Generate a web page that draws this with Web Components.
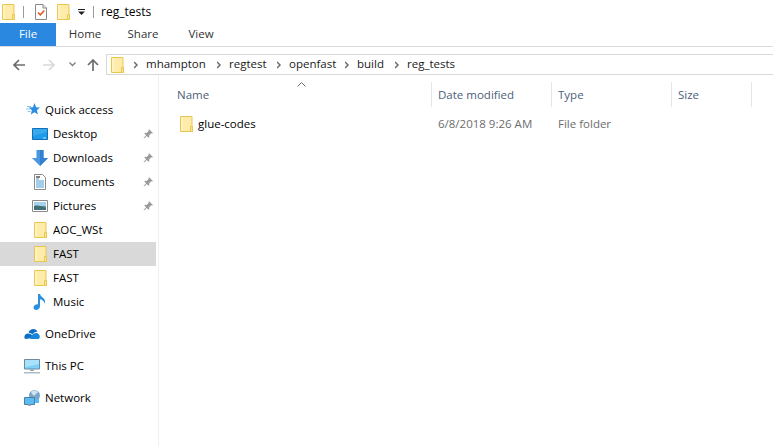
<!DOCTYPE html>
<html>
<head>
<meta charset="utf-8">
<style>
  html, body { margin: 0; padding: 0; background: #fff; }
  body { width: 773px; height: 446px; overflow: hidden; font: 11.5px "Open Sans", "Noto Sans", sans-serif; color: #000; }
</style>
</head>
<body>
<explorer-window>
  <title-bar slot="title" label="reg_tests"></title-bar>
  <ribbon-tabs slot="tabs"></ribbon-tabs>
  <address-bar slot="address"></address-bar>
  <nav-pane slot="nav">
    <nav-section>
      <nav-item icon="star" top>Quick access</nav-item>
      <nav-item icon="desktop" pinned>Desktop</nav-item>
      <nav-item icon="downloads" pinned>Downloads</nav-item>
      <nav-item icon="documents" pinned>Documents</nav-item>
      <nav-item icon="pictures" pinned>Pictures</nav-item>
      <nav-item icon="folder">AOC_WSt</nav-item>
      <nav-item icon="folder" selected>FAST</nav-item>
      <nav-item icon="folder">FAST</nav-item>
      <nav-item icon="music">Music</nav-item>
    </nav-section>
    <nav-section><nav-item icon="onedrive" top>OneDrive</nav-item></nav-section>
    <nav-section><nav-item icon="pc" top>This PC</nav-item></nav-section>
    <nav-section><nav-item icon="network" top>Network</nav-item></nav-section>
  </nav-pane>
  <file-list slot="files">
    <file-row name="glue-codes" date="6/8/2018 9:26 AM" type="File folder"></file-row>
  </file-list>
</explorer-window>

<script>
// all the little pictures, drawn on a 16x16 box
const ICONS = {
  folder: `<path d="M.5 .5h11.500v15h-11.500z" fill="#ffecaa" stroke="#e9c64f"/><path d="M1 1h2v14h-2z" fill="#fff3c4"/><path d="M10.500 10.500h2v5h-2z" fill="#fde58f" stroke="#e9c64f"/>`,
  star: `<path d="M10.500 1l1.600 4.200 3.900.300-3.100 2.700 1.100 4.400-3.500-2.400-3.700 2.400 1.100-4.400-3.100-2.700 4.100-.300z" fill="#2c8ee0"/><path d="M3 4.500h4M2 7h4M3.500 9.500h3" stroke="#8fc4ee"/>`,
  desktop: `<path d="M.5 2.500h15v11h-15z" fill="#1d9ae8" stroke="#0f6fb8"/><path d="M1 3h14v3l-14 4z" fill="#4cb6f2" opacity=".6"/><path d="M11 12h3" stroke="#bfe4fa"/>`,
  downloads: `<path d="M4.500 0h7v8h4.500l-8 8-8-8h4.500z" fill="#4a97e0"/><path d="M8 0h3.500v8h4.500l-8 8z" fill="#2f80d0"/>`,
  documents: `<path d="M2.500 .5h8l3 3v12h-11z" fill="#fff" stroke="#8a8a8a"/><path d="M4 5h3M4 7h8M4 9h8M4 11h8M4 13h8" stroke="#4a9bd8"/><path d="M4 2h4v2h-4z" fill="#7f7f7f"/>`,
  pictures: `<path d="M.5 2.500h15v11h-15z" fill="#fff" stroke="#8a8a8a"/><path d="M2 4h12v4h-12z" fill="#a6d2ee"/><path d="M2 8h12v4h-12z" fill="#6a9a8c"/><path d="M2 8c4-1 8 0 12 2v2h-12z" fill="#3f6f78"/>`,
  music: `<path d="M6 0h2c.500 3 5 3.500 5 7.500 0 1-.300 1.700-.700 2.300 0-2.500-1.800-4-4.300-4.500v7c0 2-1.800 3.700-3.800 3.700-1.500 0-2.700-1-2.700-2.400 0-1.900 2-3.300 3.800-3.300.300 0 .500 0 .700.100z" fill="#2b8fe0"/>`,
  onedrive: `<path d="M4.500 6.500c1-3 4.500-4.500 7-3 1 .500 1.600 1.300 2 2.300-2.300-.300-3.900.700-4.800 2.400-1.300-.900-2.800-1.100-4.200-1.700z" fill="#0f6fc6"/><path d="M.5 12c-.600-2.200 1-4.400 3.500-4.500 1.700 0 3.300.800 4.400 2l-2 2.800-4.800.700c-.500 0-.900-.400-1.100-1z" fill="#0f6fc6"/><path d="M6 13c1-3 3-6 6-6 2.200 0 3.800 1.800 3.800 3.700 0 1.400-1 2.300-2.200 2.300z" fill="#1a86d8"/>`,
  pc: `<path d="M.5 1.500h15v9.500h-15z" fill="#7fd0f7" stroke="#6d8aa0"/><path d="M1 2h14v4l-14 3z" fill="#a9e2fb"/><path d="M6 11h4v2h-4z" fill="#9fb0bd"/><path d="M0 14h16v1.500h-16z" fill="#aebcc6"/>`,
  network: `<circle cx="10.500" cy="5.500" r="5.500" fill="#7aa7c9"/><path d="M7 2c2-2 5-2 7 0-1 2-2 1-3 3s-2 0-4-3z" fill="#cfe3f0"/><path d="M.5 7.500h10v7h-10z" fill="#5cbcf2" stroke="#4d7fa5"/><path d="M4 14.500h3v1.500h-3z" fill="#9fb0bd"/><path d="M11 9h4v4h-4z" fill="#5cbcf2"/>`,
  pin: `<path d="M9.500 1.500l5 5-1.200 1-1-.600-2.800 2.800.300 2.300-1 1-2.500-2.500-3.500 3.500-.800-.800 3.500-3.500-2.500-2.500 1-1 2.300.300 2.800-2.800-.600-1z" fill="#9a9a9a"/>`,
  note: `<path d="M.5 .5h7.500l3.500 3.500v11.500h-11z" fill="#fff" stroke="#8a8a8a"/><path d="M8 .5v3.500h3.500" fill="#e8e8e8" stroke="#8a8a8a"/><path d="M3 8.500l2.300 2.300 4-4.300" fill="none" stroke="#e2582a" stroke-width="1.600"/>`
};

const svg = (name, w = 16, h = 16) =>
  `<svg width="${w}" height="${h}" viewBox="0 0 ${w} ${h}" style="display:block;flex:none">${ICONS[name]}</svg>`;

const tpl = (html) => {
  const t = document.createElement('template');
  t.innerHTML = html;
  return t;
};

class Base extends HTMLElement {
  connectedCallback() {
    if (this.shadowRoot) return;
    const root = this.attachShadow({mode: 'open'});
    root.appendChild(document.importNode(tpl(this.render()).content, true));
  }
}

class ExplorerWindow extends Base {
  render() {
    return `<style>
      :host { display: grid; grid-template: 23px 24px 28px 1fr / 159px 1fr; width: 773px; height: 446px; }
      .wide { grid-column: 1 / 3; }
    </style>
    <div class="wide"><slot name="title"></slot></div>
    <div class="wide"><slot name="tabs"></slot></div>
    <div class="wide"><slot name="address"></slot></div>
    <slot name="nav"></slot>
    <slot name="files"></slot>`;
  }
}

class TitleBar extends Base {
  render() {
    return `<style>
      :host { display: flex; align-items: center; height: 23px; padding-left: 2px; color: #000; }
      i { width: 1px; height: 12px; background: #999; flex: none; }
      .caret { display: block; flex: none; }
    </style>
    ${svg('folder', 13, 16)}
    <i style="margin-left:8px"></i>
    <span style="margin-left:11px">${svg('note', 12, 16)}</span>
    <span style="margin-left:10px">${svg('folder', 13, 16)}</span>
    <svg class="caret" style="margin-left:8px" width="7" height="6" viewBox="0 0 7 6"><path d="M0 0h7v1h-7zM0 2.500h7l-3.500 3.500z" fill="#222"/></svg>
    <i style="margin-left:8px"></i>
    <span style="margin-left:7px;font-size:12px">${this.getAttribute('label')}</span>`;
  }
}

class RibbonTabs extends Base {
  render() {
    return `<style>
      :host { display: flex; height: 24px; box-sizing: border-box; border-bottom: 1px solid #dadbdc; color: #333; }
      span { width: 58px; text-align: center; line-height: 22px; }
      .file { width: 56px; height: 23px; background: #2b88e0; color: #fff; }
    </style>
    <span class="file">File</span>
    <span>Home</span>
    <span>Share</span>
    <span>View</span>`;
  }
}

class AddressBar extends Base {
  render() {
    const crumbs = [['mhampton', 83], ['regtest', 60], ['openfast', 68], ['build', 50], ['reg_tests', 70]];
    return `<style>
      :host { display: flex; align-items: center; height: 28px; padding-top: 7px; box-sizing: border-box; }
      .btns { display: flex; align-items: center; width: 106px; flex: none; }
      .box { flex: 1; height: 21px; box-sizing: border-box; display: flex; align-items: center; border: 1px solid #d9d9d9; border-right: 0; padding-left: 4px; color: #1a1a1a; }
      .crumb { display: block; padding-bottom: 2px; }
      .arrow { display: block; flex: none; }
    </style>
    <div class="btns">
      <svg class="arrow" style="margin-left:13px" width="12" height="12" viewBox="0 0 12 12"><path d="M6 1l-5 5 5 5M1 6h11" fill="none" stroke="#6d6d6d" stroke-width="1.700"/></svg>
      <svg class="arrow" style="margin-left:18px" width="12" height="12" viewBox="0 0 12 12"><path d="M6 1l5 5-5 5M11 6h-11" fill="none" stroke="#d9d9d9" stroke-width="1.700"/></svg>
      <svg class="arrow" style="margin-left:14px" width="7" height="5" viewBox="0 0 7 5"><path d="M.5 .5l3 3 3-3" fill="none" stroke="#7d7d7d" stroke-width="1.300"/></svg>
      <svg class="arrow" style="margin-left:11px" width="12" height="12" viewBox="0 0 12 12"><path d="M1 6l5-5 5 5M6 1v11" fill="none" stroke="#6d6d6d" stroke-width="1.700"/></svg>
    </div>
    <div class="box">
      ${svg('folder', 13, 16)}
      <span style="width:10px"></span>
      ${crumbs.map(([c, w]) => `<svg class="arrow" width="12" height="8" viewBox="0 0 12 8"><path d="M0 1l3 3-3 3" fill="none" stroke="#6d6d6d" stroke-width="1.500"/></svg><span class="crumb" style="width:${w - 12}px">${c}</span>`).join('')}
    </div>`;
  }
}

class NavPane extends Base {
  render() {
    return `<style>
      :host { display: flex; flex-direction: column; gap: 8px; padding-top: 23px; box-sizing: border-box; width: 159px; border-right: 1px solid #f0f0f0; }
      ::slotted(*) { display: block; }
    </style><slot></slot>`;
  }
}

class NavSection extends Base {
  render() {
    return `<style>:host { display: block; }</style><slot></slot>`;
  }
}

class NavItem extends Base {
  render() {
    const top = this.hasAttribute('top');
    const name = this.getAttribute('icon');
    const leaf = name === 'folder';
    return `<style>
      :host { display: flex; align-items: center; height: 24px; width: 156px; position: relative; box-sizing: border-box; padding-left: ${top ? 24 : leaf ? 34 : 32}px; color: #000; }
      :host([selected]) { background: #d9d9d9; }
      .label { margin-left: ${leaf ? 6 : 5}px; padding-bottom: 2px; }
      .pin { position: absolute; left: 142px; top: 6px; }
    </style>
    ${svg(name, leaf ? 13 : 16, 16)}
    <span class="label"><slot></slot></span>
    ${this.hasAttribute('pinned') ? `<svg class="pin" width="12" height="12" viewBox="0 0 16 16">${ICONS.pin}</svg>` : ''}`;
  }
}

class FileList extends Base {
  render() {
    const cols = [['Name', 261], ['Date modified', 120], ['Type', 120], ['Size', 80]];
    return `<style>
      :host { display: block; padding: 7px 0 0 12px; position: relative; }
      .head { display: flex; height: 25px; align-items: center; color: #4c607a; }
      .col { box-sizing: border-box; height: 25px; line-height: 26px; padding-left: 6px; border-right: 1px solid #e5e5e5; flex: none; }
      .sort { position: absolute; left: 138px; top: 7px; }
      .rows { margin-top: 5px; }
    </style>
    <svg class="sort" width="9" height="5" viewBox="0 0 9 5"><path d="M.5 4.500l4-4 4 4" fill="none" stroke="#6d6d6d"/></svg>
    <div class="head">${cols.map(([c, w]) => `<div class="col" style="width:${w}px">${c}</div>`).join('')}</div>
    <div class="rows"><slot></slot></div>`;
  }
}

class FileRow extends Base {
  render() {
    return `<style>
      :host { display: flex; align-items: center; height: 24px; color: #6d6d6d; }
      .name { width: 261px; display: flex; align-items: center; padding-left: 9px; box-sizing: border-box; color: #000; }
      .name span { margin-left: 5px; padding-bottom: 2px; }
      .date { width: 120px; padding: 0 0 2px 6px; box-sizing: border-box; }
      .type { padding: 0 0 2px 6px; }
    </style>
    <div class="name">${svg('folder', 13, 16)}<span>${this.getAttribute('name')}</span></div>
    <div class="date">${this.getAttribute('date')}</div>
    <div class="type">${this.getAttribute('type')}</div>`;
  }
}

customElements.define('title-bar', TitleBar);
customElements.define('ribbon-tabs', RibbonTabs);
customElements.define('address-bar', AddressBar);
customElements.define('nav-item', NavItem);
customElements.define('nav-section', NavSection);
customElements.define('nav-pane', NavPane);
customElements.define('file-row', FileRow);
customElements.define('file-list', FileList);
customElements.define('explorer-window', ExplorerWindow);
</script>
</body>
</html>
